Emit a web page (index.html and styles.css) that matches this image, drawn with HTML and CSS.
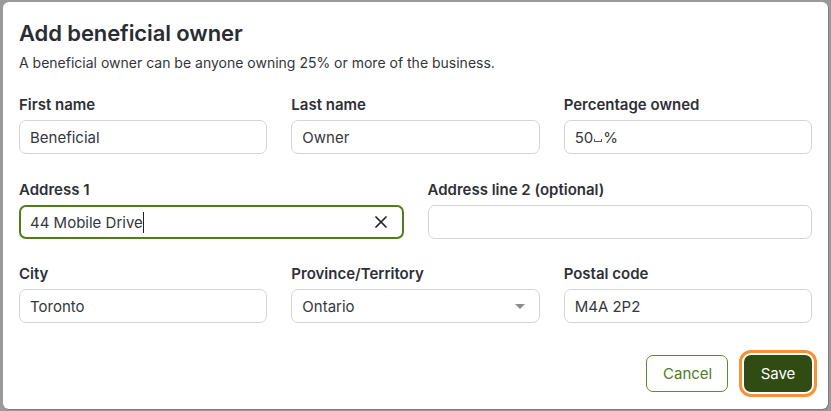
FILE: index.html
```html
<!DOCTYPE html>
<html lang="en">
<head>
<meta charset="utf-8">
<title>Add beneficial owner</title>
<link rel="stylesheet" href="styles.css">
</head>
<body>
<div class="dialog">
  <h1 class="title">Add beneficial owner</h1>
  <p class="subtitle">A beneficial owner can be anyone owning 25% or more of the business.</p>

  <div class="row three">
    <div class="field">
      <div class="label">First name</div>
      <div class="input">Beneficial</div>
    </div>
    <div class="field">
      <div class="label">Last name</div>
      <div class="input">Owner</div>
    </div>
    <div class="field">
      <div class="label">Percentage owned</div>
      <div class="input">50<span class="space-mark"></span>%</div>
    </div>
  </div>

  <div class="row two">
    <div class="field">
      <div class="label">Address 1</div>
      <div class="input focused">
        <span class="value">44 Mobile Drive<span class="caret"></span></span>
        <svg class="clear" width="12" height="12" viewBox="0 0 12 12" aria-hidden="true">
          <path d="M1 1 L11 11 M11 1 L1 11" stroke="#222" stroke-width="1.7" stroke-linecap="round" fill="none"/>
        </svg>
      </div>
    </div>
    <div class="field">
      <div class="label">Address line 2 (optional)</div>
      <div class="input"></div>
    </div>
  </div>

  <div class="row three">
    <div class="field">
      <div class="label">City</div>
      <div class="input">Toronto</div>
    </div>
    <div class="field">
      <div class="label">Province/Territory</div>
      <div class="input select">
        <span class="value">Ontario</span>
        <span class="arrow"></span>
      </div>
    </div>
    <div class="field">
      <div class="label">Postal code</div>
      <div class="input">M4A 2P2</div>
    </div>
  </div>

  <div class="actions">
    <button class="btn cancel" type="button">Cancel</button>
    <button class="btn save" type="button">Save</button>
  </div>
</div>
</body>
</html>
```

FILE: styles.css
```css
* {
  box-sizing: border-box;
}

html, body {
  margin: 0;
  padding: 0;
}

body {
  background: #9a9a9a;
  font-family: Inter, "Noto Sans", "Liberation Sans", sans-serif;
  width: 831px;
  height: 411px;
  overflow: hidden;
  padding: 2px 3px 2px 3px;
}

.dialog {
  width: 825px;
  height: 407px;
  background: #ffffff;
  border-radius: 6px;
  padding: 17px 16px 17px 16px;
  box-shadow: 1px 1px 0 #7d7d7d;
  display: flex;
  flex-direction: column;
}

.title {
  margin: 0;
  font-size: 22px;
  line-height: 28px;
  font-weight: 600;
  color: #2a2c33;
  letter-spacing: -0.1px;
}

.subtitle {
  margin: 7px 0 0 0;
  font-size: 14px;
  line-height: 18px;
  color: #33353a;
}

.row {
  display: grid;
  column-gap: 24px;
}

.row + .row {
  margin-top: 25px;
}

.row.two {
  margin-top: 26px;
}

.subtitle + .row {
  margin-top: 23px;
}

.row.three {
  grid-template-columns: repeat(3, 1fr);
}

.row.two {
  grid-template-columns: repeat(2, 1fr);
}

.field {
  display: flex;
  flex-direction: column;
}

.label {
  font-size: 15px;
  line-height: 20px;
  font-weight: 600;
  color: #2e3036;
  margin-bottom: 5px;
}

.input {
  height: 34px;
  border: 1px solid #d8d3d3;
  border-radius: 7px;
  padding: 0 10px;
  display: flex;
  align-items: center;
  font-size: 15px;
  color: #35373b;
}

.input.focused {
  border: 2px solid #4f7d1e;
  padding: 0 15px 0 9px;
  justify-content: space-between;
}

.value {
  display: flex;
  align-items: center;
}

.caret {
  display: inline-block;
  width: 1px;
  height: 21px;
  background: #222;
}

.clear {
  display: block;
}

.space-mark {
  display: inline-block;
  width: 8px;
  height: 3px;
  border: 1px solid #555;
  border-top: none;
  margin: 6px 1px 0 1px;
}

.input.select {
  justify-content: space-between;
  padding-right: 14px;
}

.arrow {
  width: 0;
  height: 0;
  border-left: 5px solid transparent;
  border-right: 5px solid transparent;
  border-top: 5px solid #8f8b8b;
}

.actions {
  margin-top: auto;
  display: flex;
  justify-content: flex-end;
  gap: 16px;
}

.btn {
  font-family: Inter, "Noto Sans", "Liberation Sans", sans-serif;
  font-size: 15px;
  height: 37px;
  border-radius: 7px;
  padding: 0 16px;
  cursor: pointer;
}

.cancel {
  width: 82px;
  background: #fff;
  color: #4f7d1e;
  border: 1px solid #5d8b2c;
}

.save {
  width: 68px;
  background: #304c12;
  color: #fff;
  border: none;
  outline: 3px solid #f7923a;
  outline-offset: 2px;
}
```
